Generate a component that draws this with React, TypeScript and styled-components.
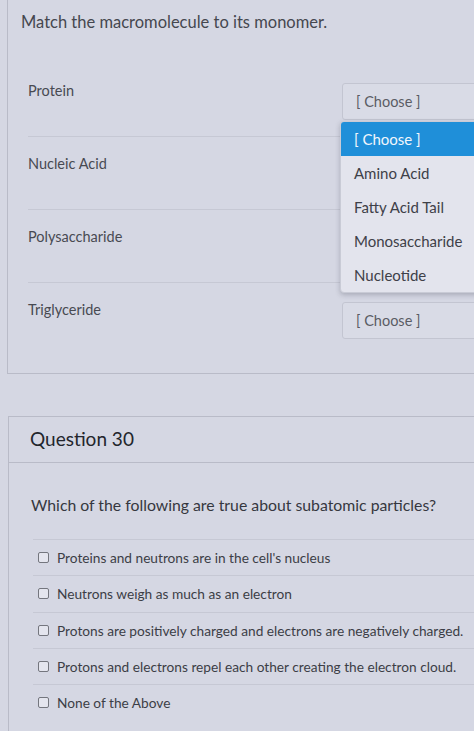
import styled, { createGlobalStyle } from "styled-components";

const GlobalStyle = createGlobalStyle`
  body {
    margin: 0;
    background: #d5d7e3;
    font-family: Lato, "Open Sans", sans-serif;
    color: #3c3e46;
    overflow: hidden;
  }
`;

const StyledPage = styled.div`
  box-sizing: border-box;
  width: 492px;
  padding-left: 7px;
`;

const StyledMatchPanel = styled.section`
  border-left: 1px solid #b9bbc8;
  border-bottom: 1px solid #b9bbc8;
  padding: 12px 0 18px 13px;
`;

const StyledPrompt = styled.p`
  margin: 0;
  font-size: 16.5px;
  line-height: 20px;
  color: #45474f;
`;

const StyledMatchList = styled.div`
  margin: 32px 0 0 7px;
`;

const StyledMatchRow = styled.div`
  position: relative;
  display: grid;
  grid-template-columns: 1fr 150px;
  height: 72px;
  border-bottom: 1px solid #c6c8d4;

  &:last-child {
    border-bottom: none;
  }
`;

const StyledTerm = styled.span`
  padding-top: 18px;
  font-size: 14.5px;
  line-height: 18px;
  color: #484a52;
`;

const StyledSelect = styled.div`
  box-sizing: border-box;
  height: 37px;
  margin-top: 19px;
  padding-left: 13px;
  display: flex;
  align-items: center;
  border: 1px solid #c3c5d1;
  border-radius: 3px;
  background: #d9dbe6;
  font-size: 14.5px;
  color: #5a5c64;
`;

const StyledMenu = styled.ul`
  position: absolute;
  top: 57px;
  right: 0;
  width: 150px;
  margin: 0;
  padding: 0;
  list-style: none;
  background: #e3e4ed;
  border: 1px solid #c9cbd6;
  border-radius: 4px;
  box-shadow: 0 2px 5px rgba(40, 42, 60, 0.25);
  overflow: hidden;
  z-index: 2;
`;

const StyledOption = styled.li<{ $active?: boolean }>`
  height: 34px;
  padding-left: 13px;
  display: flex;
  align-items: center;
  font-size: 15px;
  background: ${(p) => (p.$active ? "#1f8fd9" : "transparent")};
  color: ${(p) => (p.$active ? "#f2f6fc" : "#3e4048")};
`;

const StyledQuestion = styled.section`
  margin: 42px 0 0 1px;
  border-left: 1px solid #b9bbc8;
  border-top: 1px solid #b9bbc8;
`;

const StyledHeader = styled.header`
  height: 46px;
  padding: 0 0 2px 21px;
  box-sizing: border-box;
  display: flex;
  align-items: center;
  border-bottom: 1px solid #b9bbc8;
  font-size: 19px;
  color: #23252c;
`;

const StyledBody = styled.div`
  padding: 31px 0 40px 22px;
`;

const StyledQuestionText = styled.p`
  margin: 0;
  font-size: 15.8px;
  line-height: 22px;
  color: #35373f;
`;

const StyledAnswers = styled.ul`
  margin: 23px 0 0 2px;
  padding: 0;
  list-style: none;
`;

const StyledAnswer = styled.li`
  height: 35.3px;
  padding-left: 5px;
  display: flex;
  align-items: center;
  gap: 8px;
  border-top: 1px solid #c6c8d4;
  font-size: 13.7px;
  color: #3c3e46;
`;

const StyledCheckbox = styled.span`
  box-sizing: border-box;
  width: 11px;
  height: 11px;
  border: 1px solid #74767e;
  border-radius: 2px;
  background: #e4e5ee;
  flex-shrink: 0;
`;

const terms = ["Protein", "Nucleic Acid", "Polysaccharide", "Triglyceride"];
const monomers = [
  "[ Choose ]",
  "Amino Acid",
  "Fatty Acid Tail",
  "Monosaccharide",
  "Nucleotide"
];
const answers = [
  "Proteins and neutrons are in the cell's nucleus",
  "Neutrons weigh as much as an electron",
  "Protons are positively charged and electrons are negatively charged.",
  "Protons and electrons repel each other creating the electron cloud.",
  "None of the Above"
];

export default function App() {
  return (
    <StyledPage>
      <GlobalStyle />
      <StyledMatchPanel>
        <StyledPrompt>Match the macromolecule to its monomer.</StyledPrompt>
        <StyledMatchList>
          {terms.map((term, idx) => (
            <StyledMatchRow key={term}>
              <StyledTerm>{term}</StyledTerm>
              {(idx === 0 || idx === terms.length - 1) && (
                <StyledSelect>[ Choose ]</StyledSelect>
              )}
              {idx === 0 && (
                <StyledMenu>
                  {monomers.map((m, i) => (
                    <StyledOption key={m} $active={i === 0}>
                      {m}
                    </StyledOption>
                  ))}
                </StyledMenu>
              )}
            </StyledMatchRow>
          ))}
        </StyledMatchList>
      </StyledMatchPanel>

      <StyledQuestion>
        <StyledHeader>Question 30</StyledHeader>
        <StyledBody>
          <StyledQuestionText>
            Which of the following are true about subatomic particles?
          </StyledQuestionText>
          <StyledAnswers>
            {answers.map((a) => (
              <StyledAnswer key={a}>
                <StyledCheckbox />
                {a}
              </StyledAnswer>
            ))}
          </StyledAnswers>
        </StyledBody>
      </StyledQuestion>
    </StyledPage>
  );
}
